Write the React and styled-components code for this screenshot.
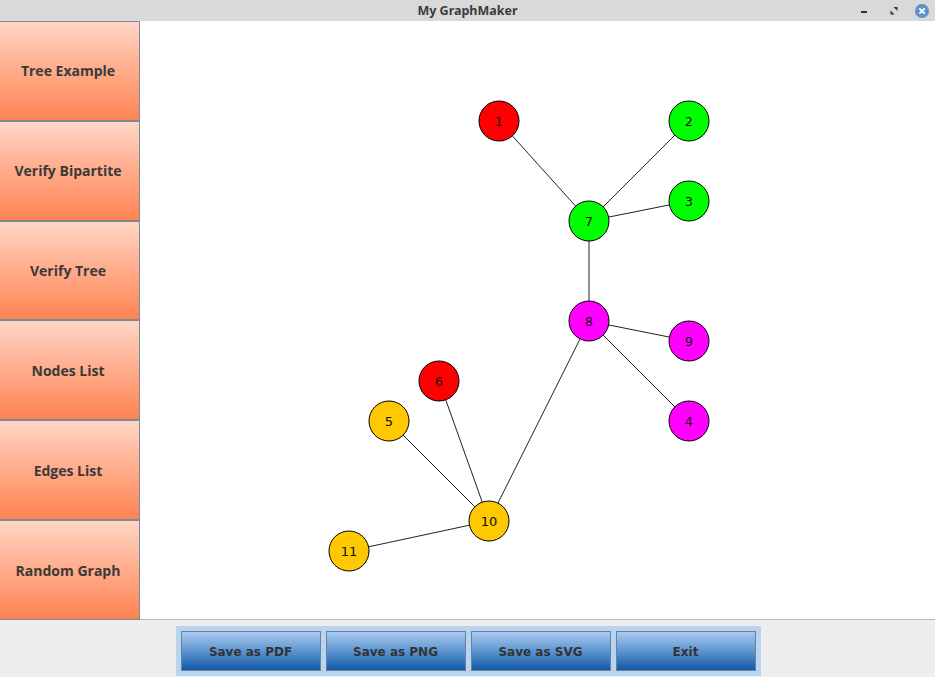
import React from 'react'
import styled, { createGlobalStyle } from 'styled-components'

const GlobalStyle = createGlobalStyle`
    html, body {
        margin: 0;
        padding: 0;
        overflow: hidden;
        background: #eeeeee;
    }
`

const Window = styled.div`
    display: flex;
    flex-direction: column;
    width: 935px;
    height: 677px;
    background: #eeeeee;
`

const TitleBar = styled.div`
    position: relative;
    display: flex;
    justify-content: center;
    align-items: center;
    height: 21px;
    background: #d9d9d9;
    font-family: "Noto Sans", "DejaVu Sans", sans-serif;
    font-weight: 700;
    font-size: 12.5px;
    color: #3c3c3c;
`

const Controls = styled.div`
    position: absolute;
    right: 5px;
    top: 0;
    height: 21px;
    display: flex;
    align-items: center;
`

const ControlIcon = styled.svg`
    display: block;
    margin-left: ${p => p.$gap || 0}px;
`

const Main = styled.div`
    display: flex;
    flex-direction: row;
    height: 599px;
`

const Sidebar = styled.div`
    display: flex;
    flex-direction: column;
    width: 140px;
`

const SideButton = styled.div`
    flex: 1;
    display: flex;
    align-items: center;
    justify-content: center;
    padding-right: 3px;
    border: 1px solid #7b8998;
    border-left: none;
    background: linear-gradient(to bottom, #ffd6c6 0%, #ffab8a 50%, #ff8352 100%);
    font-family: "Open Sans", "Noto Sans", sans-serif;
    font-weight: 700;
    font-size: 14px;
    color: #3a3a3a;
    cursor: pointer;
`

const Canvas = styled.div`
    flex: 1;
    background: #ffffff;
    border-bottom: 1px solid #b8b8b8;
    overflow: hidden;
`

const BottomBar = styled.div`
    flex: 1;
    display: flex;
    justify-content: center;
    align-items: flex-start;
    padding-top: 6px;
    padding-left: 1px;
`

const ButtonPanel = styled.div`
    display: flex;
    gap: 5px;
    padding: 5px;
    background: #b8d4f1;
`

const SaveButton = styled.div`
    display: flex;
    align-items: center;
    justify-content: center;
    padding-top: 1px;
    box-sizing: border-box;
    width: 140px;
    height: 40px;
    border: 1px solid #6c8197;
    background: linear-gradient(to bottom, #a9cbed 0%, #5d95d0 50%, #1259a7 100%);
    font-family: "DejaVu Sans", sans-serif;
    font-weight: 700;
    font-size: 12px;
    color: #333333;
    cursor: pointer;
`

const NodeLabel = styled.text`
    font-family: "DejaVu Sans", sans-serif;
    font-size: 13px;
    fill: #111111;
`

const RED = '#ff0000'
const GREEN = '#00ff00'
const MAGENTA = '#ff00ff'
const YELLOW = '#ffc800'

const nodes = [
    { id: 1, x: 499, y: 121, color: RED },
    { id: 2, x: 689, y: 121, color: GREEN },
    { id: 3, x: 689, y: 201, color: GREEN },
    { id: 7, x: 589, y: 221, color: GREEN },
    { id: 8, x: 589, y: 321, color: MAGENTA },
    { id: 9, x: 689, y: 341, color: MAGENTA },
    { id: 4, x: 689, y: 421, color: MAGENTA },
    { id: 6, x: 439, y: 381, color: RED },
    { id: 5, x: 389, y: 421, color: YELLOW },
    { id: 10, x: 489, y: 521, color: YELLOW },
    { id: 11, x: 349, y: 551, color: YELLOW },
]

const edges = [[1, 7], [2, 7], [3, 7], [7, 8], [8, 9], [8, 4], [8, 10], [6, 10], [5, 10], [11, 10]]

const byId = Object.fromEntries(nodes.map(n => [n.id, n]))

function Graph() {
  return (
    <svg width="795" height="598" viewBox="140 21 795 598" style={{ display: 'block' }}>
        {edges.map(([a, b]) => (
            <line key={`${a}-${b}`} x1={byId[a].x} y1={byId[a].y} x2={byId[b].x} y2={byId[b].y}
                stroke="#222" strokeWidth="1" />
        ))}
        {nodes.map(n => (
            <g key={n.id}>
                <circle cx={n.x} cy={n.y} r="20" fill={n.color} stroke="#000" strokeWidth="1" />
                <NodeLabel x={n.x} y={n.y + 5} textAnchor="middle">{n.id}</NodeLabel>
            </g>
        ))}
    </svg>
  )
}

const sideItems = ['Tree Example', 'Verify Bipartite', 'Verify Tree', 'Nodes List', 'Edges List', 'Random Graph']
const saveItems = ['Save as PDF', 'Save as PNG', 'Save as SVG', 'Exit']

export default function App() {
  return (
    <Window>
        <GlobalStyle />
        <TitleBar>
            My GraphMaker
            <Controls>
                <ControlIcon width="12" height="12" viewBox="0 0 12 12">
                    <rect x="3" y="6" width="6" height="2" fill="#333" />
                </ControlIcon>
                <ControlIcon $gap={18} width="12" height="12" viewBox="0 0 12 12">
                    <path d="M5.5 2 L9.5 2 L9.5 6 Z" fill="#333" />
                    <path d="M2.5 5.5 L6.5 9.5 L2.5 9.5 Z" fill="#333" />
                </ControlIcon>
                <ControlIcon $gap={14} width="16" height="16" viewBox="0 0 16 16">
                    <circle cx="8" cy="8" r="7" fill="#5b93c9" />
                    <path d="M5.3 5.3 L10.7 10.7 M10.7 5.3 L5.3 10.7" stroke="#fff" strokeWidth="1.8" />
                </ControlIcon>
            </Controls>
        </TitleBar>
        <Main>
            <Sidebar>
                {sideItems.map(s => <SideButton key={s}>{s}</SideButton>)}
            </Sidebar>
            <Canvas>
                <Graph />
            </Canvas>
        </Main>
        <BottomBar>
            <ButtonPanel>
                {saveItems.map(s => <SaveButton key={s}>{s}</SaveButton>)}
            </ButtonPanel>
        </BottomBar>
    </Window>
  )
}
